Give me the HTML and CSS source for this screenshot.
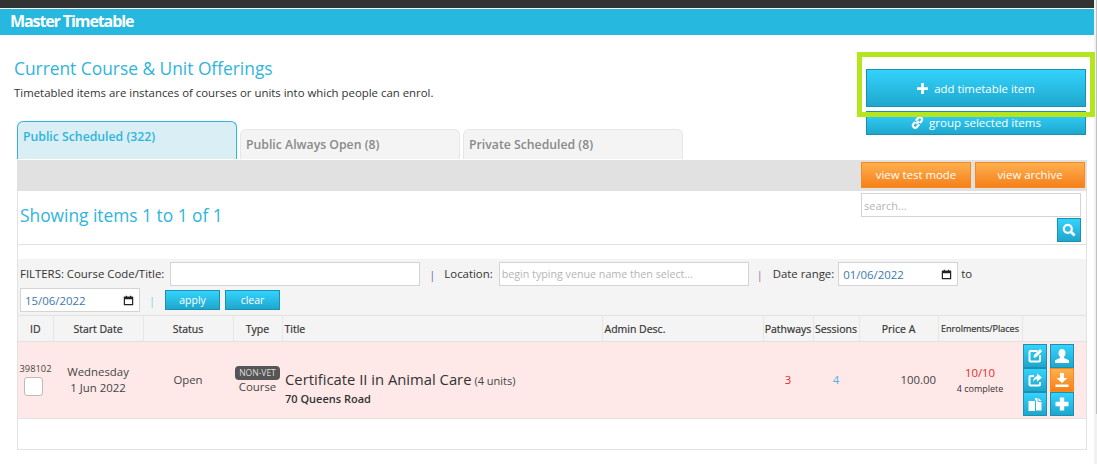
FILE: index.html
```html
<!DOCTYPE html>
<html lang="en">
<head>
<meta charset="utf-8">
<title>Master Timetable</title>
<link rel="stylesheet" href="styles.css">
</head>
<body>
<div class="scrollbar"><div class="scrollbar-thumb"></div></div>
<div class="topbar"></div>
<h1 class="pagetitle">Master Timetable</h1>
<section class="intro">
  <div class="intro-text">
    <h2>Current Course &amp; Unit Offerings</h2>
    <p>Timetabled items are instances of courses or units into which people can enrol.</p>
  </div>
  <div class="intro-actions">
    <a class="btn btn-add"><svg class="ico-plus" viewBox="0 0 12 12"><path d="M4.500 0h3v4.500H12v3H7.500V12h-3V7.500H0v-3h4.500z"/></svg>add timetable item</a>
    <a class="btn btn-group"><svg class="ico-link" viewBox="0 0 12 12"><path d="M4.800 7.200 7.200 4.800M4.400 4.400 6.400 2a2.100 2.100 0 0 1 3.400 2.600L8.200 6.600M7.600 7.600 5.600 10a2.100 2.100 0 0 1-3.400-2.600l1.600-2" fill="none" stroke="#fff" stroke-width="2"/></svg>group selected items</a>
    <div class="highlight"></div>
  </div>
</section>
<nav class="tabs">
  <a class="tab tab-active">Public Scheduled (322)</a>
  <a class="tab">Public Always Open (8)</a>
  <a class="tab">Private Scheduled (8)</a>
</nav>
<main class="panel">
  <div class="toolbar">
    <a class="btn-orange">view test mode</a>
    <a class="btn-orange">view archive</a>
  </div>
  <div class="results">
    <h3>Showing items 1 to 1 of 1</h3>
    <div class="search">
      <input class="search-input" type="text" placeholder="search...">
      <a class="icon-btn"><svg viewBox="0 0 14 14"><circle cx="5.800" cy="5.800" r="4" fill="none" stroke="#fff" stroke-width="2.200"/><path d="M8.800 8.800 12.600 12.600" stroke="#fff" stroke-width="2.800"/></svg></a>
    </div>
  </div>
  <form class="filters">
    <div class="filter-line">
      <label>FILTERS: Course Code/Title:</label>
      <input class="f-text f-course" type="text">
      <span class="sep sep-purple">|</span>
      <label>Location:</label>
      <input class="f-text f-location" type="text" placeholder="begin typing venue name then select...">
      <span class="sep sep-mauve">|</span>
      <label class="l-range">Date range:</label>
      <div class="f-date f-date-first"><input type="text" value="01/06/2022"><svg viewBox="0 0 12 12"><path d="M1.500 2.500h9v8h-9z" fill="none" stroke="#222" stroke-width="1.300"/><path d="M1.500 2h9v2.500h-9zM3 .8h1.300V2H3zM7.700 .8H9V2H7.700z" fill="#222"/></svg></div>
      <label class="l-to">to</label>
    </div>
    <div class="filter-line filter-second">
      <div class="f-date"><input type="text" value="15/06/2022"><svg viewBox="0 0 12 12"><path d="M1.500 2.500h9v8h-9z" fill="none" stroke="#222" stroke-width="1.300"/><path d="M1.500 2h9v2.500h-9zM3 .8h1.300V2H3zM7.700 .8H9V2H7.700z" fill="#222"/></svg></div>
      <span class="sep sep-blue">|</span>
      <a class="btn-small">apply</a>
      <a class="btn-small">clear</a>
    </div>
  </form>
  <table class="grid">
    <colgroup>
      <col class="c-id"><col class="c-start"><col class="c-status"><col class="c-type"><col class="c-title"><col class="c-admin"><col class="c-path"><col class="c-sess"><col class="c-price"><col class="c-enrol"><col>
    </colgroup>
    <thead>
      <tr>
        <th>ID</th><th>Start Date</th><th>Status</th><th>Type</th>
        <th class="left">Title</th><th class="left">Admin Desc.</th>
        <th>Pathways</th><th>Sessions</th><th>Price A</th><th class="small">Enrolments/Places</th><th></th>
      </tr>
    </thead>
    <tbody>
      <tr>
        <td class="id"><span>398102</span><input class="check" type="checkbox"></td>
        <td class="date">Wednesday<br>1 Jun 2022</td>
        <td>Open</td>
        <td class="type"><span class="badge">NON-VET</span><br>Course</td>
        <td class="left title"><span class="course">Certificate II in Animal Care</span> <span class="units">(4 units)</span><br><strong>70 Queens Road</strong></td>
        <td></td>
        <td class="red">3</td>
        <td class="blue">4</td>
        <td class="price">100.00</td>
        <td class="enrol"><span class="places">10/10</span><br><span class="complete">4 complete</span></td>
        <td class="actions">
          <div class="action-grid">
            <a class="act"><svg viewBox="0 0 16 16"><path d="M10.500 3H3.500a1 1 0 0 0-1 1v8.500a1 1 0 0 0 1 1H12a1 1 0 0 0 1-1V7" fill="none" stroke="#fff" stroke-width="2"/><path d="M6.500 9.800 7 7l6-6 2.200 2.200-6 6z" fill="#fff"/></svg></a>
            <a class="act"><svg viewBox="0 0 16 16"><path d="M13 10v2.500a1 1 0 0 1-1 1H3.500a1 1 0 0 1-1-1V5a1 1 0 0 1 1-1H7" fill="none" stroke="#fff" stroke-width="2"/><path d="M10 1.500l5 4-5 4.200V7.300C8 7.300 6.800 8.300 6 10.500c0-4 1.600-6 4-6.300z" fill="#fff"/></svg></a>
            <a class="act"><svg viewBox="0 0 16 16"><path d="M1.500 5H8v10H1.500zM8 2h3.500L14.500 5v9.500H9V4.500L8 4z" fill="#fff"/><path d="M11 1.500v4h4" fill="none" stroke="#2ab3d8" stroke-width=".8"/></svg></a>
            <a class="act"><svg viewBox="0 0 16 16"><path d="M8 1c2.200 0 3.500 1.700 3.500 4 0 1.500-.6 3-1.500 3.800v1.200l5 2.200V15H1v-2.800L6 10V8.800C5.100 8 4.500 6.500 4.500 5 4.500 2.700 5.800 1 8 1z" fill="#fff"/></svg></a>
            <a class="act act-orange"><svg viewBox="0 0 16 16"><path d="M6 1h4v5h3.500L8 11 2.500 6H6zM1.500 12.500h13V15h-13z" fill="#fff"/></svg></a>
            <a class="act"><svg viewBox="0 0 16 16"><path d="M5.800 1.500h4.400v4.300h4.300v4.400h-4.300v4.300H5.800v-4.300H1.500V5.800h4.300z" fill="#fff"/></svg></a>
          </div>
        </td>
      </tr>
    </tbody>
  </table>
  <div class="panel-foot"></div>
</main>
</body>
</html>
```
FILE: styles.css
```css
* { box-sizing: border-box; }
html, body { margin: 0; padding: 0; }
body {
  position: relative;
  width: 1097px;
  height: 464px;
  overflow: hidden;
  background: #fff;
  color: #333;
  font-family: "Open Sans", "Liberation Sans", sans-serif;
  font-size: 11px;
}
a { display: block; }

.scrollbar { position: absolute; top: 0; right: 0; width: 3px; height: 464px; background: #f1f1f1; }
.scrollbar-thumb { width: 1px; height: 414px; margin-left: 2px; background: #c1c1c1; }

.topbar { height: 8px; width: 1094px; margin-bottom: 1px; background: #333; }
.pagetitle {
  height: 26px;
  width: 1094px;
  margin: 0;
  padding-left: 10px;
  background: #26b8de;
  color: #fff;
  font-size: 16px;
  line-height: 25px;
  font-weight: 700;
  letter-spacing: -1.1px;
}

.intro { display: flex; justify-content: space-between; height: 86px; padding: 0 11px 0 14px; }
.intro h2 { margin: 22px 0 0; color: #2fb5dc; font-size: 17.350px; line-height: 23px; font-weight: 400; }
.intro p { margin: 5px 0 0; color: #333; font-size: 11.400px; line-height: 15px; }
.intro-actions { position: relative; width: 220px; padding-top: 34px; }

.btn {
  display: flex;
  align-items: center;
  justify-content: center;
  color: #fff;
  border: 1px solid #1d8fb0;
  background: linear-gradient(#33d3fd, #1fa7cd);
  font-size: 11.400px;
}
.btn-add { height: 38px; }
.btn-group { height: 24px; margin-top: 4px; padding-bottom: 1px; font-size: 11.500px; }
.ico-plus { width: 11px; height: 11px; margin-right: 6px; fill: #fff; }
.ico-link { width: 13px; height: 13px; margin-right: 5px; }
.highlight {
  position: absolute;
  left: -9px;
  top: 17px;
  width: 238px;
  height: 65px;
  border: 5px solid #b5e61d;
}

.tabs { display: flex; align-items: flex-end; gap: 3px; height: 38px; padding-left: 17px; }
.tab {
  width: 220px;
  height: 30px;
  padding: 6px 0 0 5px;
  border: 1px solid #e6e6e6;
  border-bottom: 0;
  border-radius: 6px 6px 0 0;
  background: #f4f4f4;
  color: #8a8a8a;
  font-size: 12.250px;
  font-weight: 600;
  line-height: 17px;
}
.tab-active {
  height: 38px;
  border-color: #2fb5dc;
  background: #d9eff5;
  color: #2fb5dc;
}

.panel {
  width: 1070px;
  height: 290px;
  margin: 1px 0 0 17px;
  border-left: 1px solid #e2e2e2;
  border-right: 1px solid #e2e2e2;
  border-bottom: 1px solid #e2e2e2;
  display: flex;
  flex-direction: column;
}
.toolbar {
  display: flex;
  justify-content: flex-end;
  gap: 4px;
  height: 31px;
  padding: 2px 2px 0 0;
  margin: 0 -1px 0 -1px;
  background: #e1e1e1;
}
.btn-orange {
  width: 110px;
  height: 26px;
  border: 1px solid #f78a1d;
  background: linear-gradient(#ffb04f, #f5801a);
  color: #fff;
  font-size: 11.400px;
  line-height: 24px;
  text-align: center;
}
.results { display: flex; justify-content: space-between; height: 54px; border-bottom: 1px solid #e2e2e2; padding: 2px 5px 0 2px; }
.results h3 { margin: 10px 0 0; color: #2fb5dc; font-size: 17.350px; line-height: 24px; font-weight: 400; }
.search { display: flex; flex-direction: column; align-items: flex-end; gap: 1px; }
.search-input {
  width: 220px;
  height: 24px;
  padding: 0 2px;
  border: 1px solid #d4d4d4;
  background: #fff;
  font: 11px "Open Sans", sans-serif;
  outline: 0;
}
input::placeholder { color: #b5b5b5; opacity: 1; }
.icon-btn {
  width: 24px;
  height: 24px;
  padding: 4px;
  border: 1px solid #1d8fb0;
  background: linear-gradient(#33d3fd, #1fa7cd);
}
.icon-btn svg { display: block; width: 14px; height: 14px; }

.filters {
  height: 56px;
  margin-top: 14px;
  padding: 3px 0 0 2px;
  background: #f4f4f4;
}
.filter-line { display: flex; align-items: center; height: 24px; }
.filter-second { margin-top: 2px; }
.filters label { color: #333; font-size: 11.400px; line-height: 24px; white-space: nowrap; }
.f-text {
  height: 24px;
  border: 1px solid #d4d4d4;
  background: #fff;
  padding: 0 2px;
  font: 10.700px "Open Sans", sans-serif;
  outline: 0;
}
.f-course { width: 250px; margin-left: 6px; }
.f-location { width: 250px; margin-left: 6px; }
.f-date {
  display: flex;
  align-items: center;
  width: 120px;
  height: 24px;
  padding: 0 4px;
  border: 1px solid #d4d4d4;
  background: #fff;
}
.f-date input {
  flex: 1;
  min-width: 0;
  padding: 0;
  border: 0;
  outline: 0;
  background: transparent;
  color: #3a78b0;
  font: 11.400px "Open Sans", sans-serif;
}
.f-date svg { width: 11px; height: 11px; margin-right: 1px; }
.f-date-first { margin-left: 4px; }
.l-to { margin-left: 3px; }
.sep { font-size: 11px; width: 3px; }
.sep-purple { color: #6a6ab0; margin: 0 12px 0 9px; }
.sep-mauve { color: #a06a9a; margin: 0 13px 0 8px; }
.sep-blue { color: #7fcde6; margin: 0 13px 0 9px; }
.btn-small {
  width: 55px;
  height: 20px;
  margin-right: 5px;
  border: 1px solid #1d8fb0;
  background: linear-gradient(#33d3fd, #1fa7cd);
  color: #fff;
  font-size: 10.500px;
  line-height: 18px;
  text-align: center;
}

.grid { width: 1068px; border-collapse: collapse; table-layout: fixed; }
.c-id { width: 35px; }
.c-start { width: 90px; }
.c-status { width: 90px; }
.c-type { width: 49px; }
.c-title { width: 320px; }
.c-admin { width: 161px; }
.c-path { width: 50px; }
.c-sess { width: 46px; }
.c-price { width: 79px; }
.c-enrol { width: 84px; }
.grid th {
  height: 26px;
  padding: 0;
  border-top: 1px solid #e2e2e2;
  border-bottom: 1px solid #e2e2e2;
  border-right: 1px solid #e6e6e6;
  background: #f4f4f4;
  color: #333;
  font-size: 10.500px;
  font-weight: 400;
  text-align: center;
  white-space: nowrap;
  -webkit-text-stroke: 0.2px #333;
}
.grid th:last-child { border-right: 0; }
.grid th.left { text-align: left; padding-left: 2px; }
.grid th.small { font-size: 9px; }
.grid td {
  height: 77px;
  padding: 0;
  background: #fee9e8;
  border-bottom: 1px solid #e2e2e2;
  color: #444;
  text-align: center;
  vertical-align: middle;
  font-size: 11.400px;
  line-height: 16px;
}
.grid td.left { text-align: left; padding-left: 2px; }
.grid td.id { font-size: 9.300px; line-height: 12px; padding-bottom: 2px; }
.id span { display: block; }
.check {
  display: block;
  appearance: none;
  width: 19px;
  height: 19px;
  margin: 2px 0 0 6px;
  border: 1px solid #bbb;
  border-radius: 3px;
  background: #fff;
}
.grid td.type { line-height: 14px; padding-bottom: 2px; }
.badge {
  display: inline-block;
  width: 45px;
  height: 14px;
  border-radius: 4px;
  background: #555;
  color: #ddd;
  font-size: 8.500px;
  line-height: 14px;
}
.grid td.title { line-height: 18px; padding: 18px 0 0 3px; }
.course { font-size: 14.800px; color: #333; }
.units { font-size: 11px; }
.title strong { font-size: 11px; font-weight: 600; color: #333; }
.grid td.red { color: #e62a2a; }
.grid td.blue { color: #4fb5dc; }
.grid td.price { text-align: right; padding-right: 2px; }
.grid td.enrol { line-height: 15px; }
.places { color: #e62a2a; font-size: 11.400px; }
.complete { font-size: 9px; color: #333; }
.action-grid {
  display: grid;
  grid-template-columns: 24px 24px;
  grid-auto-flow: column;
  grid-template-rows: repeat(3, 24px);
  column-gap: 3px;
  margin-left: 1px;
}
.act {
  padding: 3px;
  border: 1px solid #1d8fb0;
  background: linear-gradient(#33d3fd, #1fa7cd);
}
.act svg { display: block; width: 16px; height: 16px; }
.act-orange { border-color: #f78a1d; background: linear-gradient(#ffb04f, #f5801a); }
.panel-foot { flex: 1; }
```
